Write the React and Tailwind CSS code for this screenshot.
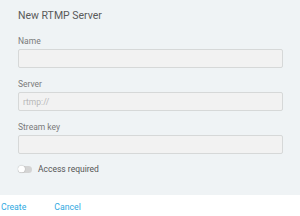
import React, { useState } from "react";

function Field({ label, placeholder }) {
  return (
    <div className="flex flex-col">
      <label className="text-[8.5px] leading-[12px] text-[#7a7a7a]">{label}</label>
      <input
        className="mt-[2px] h-[19px] w-full rounded-[2px] border border-[#d6d8d8] bg-[#f2f2f2] px-[4px] text-[8.5px] text-[#555] placeholder:text-[#b8b8b8] outline-none"
        placeholder={placeholder}
      />
    </div>
  );
}

export default function App() {
  const [access, setAccess] = useState(false);

  return (
    <div className="w-[300px] h-[216px] bg-white font-['Roboto',sans-serif]">
      {/* dialog body */}
      <div className="h-[195px] bg-[#eff3f5] pl-[18px] pr-[17px] pt-[8px]">
        <h2 className="text-[10.5px] leading-[16px] text-[#5a5a5a]">New RTMP Server</h2>

        <div className="mt-[11px] flex flex-col gap-[10px]">
          <Field label="Name" />
          <Field label="Server" placeholder="rtmp://" />
          <Field label="Stream key" />
        </div>

        <div className="mt-[9px] flex items-center gap-[6px]">
          <button
            onClick={() => setAccess(!access)}
            className="relative h-[7px] w-[14px] rounded-full bg-[#d4d4d4]"
          >
            <span className="absolute left-0 top-1/2 h-[7px] w-[7px] -translate-y-1/2 rounded-full bg-white shadow-[0_0_1px_rgba(0,0,0,0.4)]" />
          </button>
          <span className="text-[8.5px] leading-[12px] text-[#555]">Access required</span>
        </div>
      </div>

      {/* footer actions */}
      <div className="flex gap-[28px] pl-[1px] pt-[6px]">
        <button className="text-[8.7px] text-[#2fa9df]">Create</button>
        <button className="text-[8.7px] text-[#2fa9df]">Cancel</button>
      </div>
    </div>
  );
}
